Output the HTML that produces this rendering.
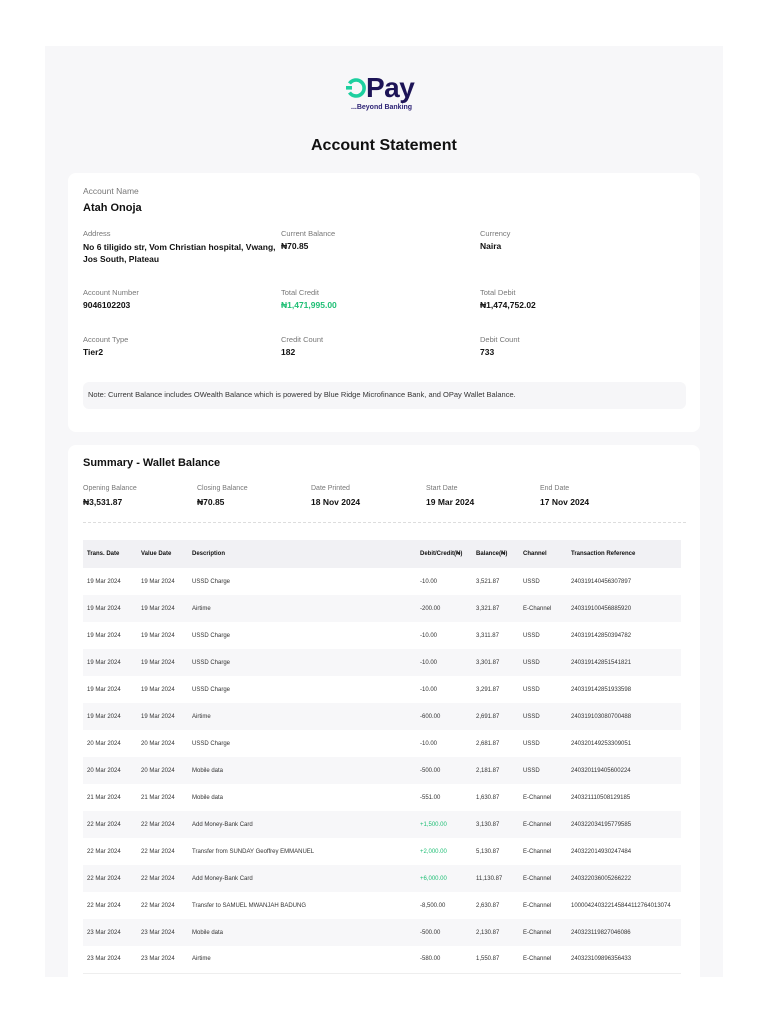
<!DOCTYPE html>
<html><head><meta charset="utf-8"><style>
*{margin:0;padding:0;box-sizing:border-box}
body{width:768px;height:1024px;background:#fff;font-family:"Liberation Sans",sans-serif;color:#111;position:relative;overflow:hidden}
.panel{position:absolute;left:45px;top:46px;width:678px;height:931px;background:#f7f7f9}
.card{position:absolute;background:#fff;border-radius:8px}
.abs{position:absolute;white-space:nowrap}
.lbl{font-size:7.5px;color:#777}
.val{font-size:8.5px;font-weight:bold;color:#111}
table{position:absolute;left:83px;top:540px;width:598px;border-collapse:collapse;font-size:6px;color:#333;background:#fff;border-bottom:1px solid #eee}
th{background:#f1f1f4;height:28px;text-align:left;font-weight:bold;color:#111;font-size:6px;padding-left:4px}
td{height:27px;padding-left:4px;white-space:nowrap}
tr:nth-child(odd) td{background:#f7f7f9}
.g{color:#1fbf75}
</style></head><body>
<div class="panel"></div>
<div class="abs" style="left:346px;top:77px;">
<svg width="20" height="22" viewBox="0 0 20 22"><path d="M3.5 6.5 A8 8 0 1 1 3.5 15.5" fill="none" stroke="#1dcf9f" stroke-width="3.6"/><rect x="0" y="9" width="6" height="3.6" fill="#1dcf9f"/></svg>
</div>
<div class="abs" style="left:366px;top:73px;font-size:28px;font-weight:bold;color:#1d1457;letter-spacing:-0.5px;line-height:30px">Pay</div>
<div class="abs" style="left:351px;top:104px;font-size:7px;font-weight:bold;color:#2e2476">...Beyond Banking</div>
<div class="abs" style="left:311px;top:137px;font-size:16px;font-weight:bold">Account Statement</div>

<div class="card" style="left:68px;top:173px;width:632px;height:259px"></div>
<div class="abs lbl" style="left:83px;top:186px;font-size:8.5px">Account Name</div>
<div class="abs" style="left:83px;top:202px;font-size:11px;font-weight:bold">Atah Onoja</div>
<div class="abs lbl" style="left:83px;top:229px">Address</div>
<div class="abs val" style="left:83px;top:241px;line-height:12px">No 6 tiligido str, Vom Christian hospital, Vwang,<br>Jos South, Plateau</div>
<div class="abs lbl" style="left:281px;top:229px">Current Balance</div>
<div class="abs val" style="left:281px;top:241px">₦70.85</div>
<div class="abs lbl" style="left:480px;top:229px">Currency</div>
<div class="abs val" style="left:480px;top:241px">Naira</div>
<div class="abs lbl" style="left:83px;top:288px">Account Number</div>
<div class="abs val" style="left:83px;top:300px">9046102203</div>
<div class="abs lbl" style="left:281px;top:288px">Total Credit</div>
<div class="abs val g" style="left:281px;top:300px">₦1,471,995.00</div>
<div class="abs lbl" style="left:480px;top:288px">Total Debit</div>
<div class="abs val" style="left:480px;top:300px">₦1,474,752.02</div>
<div class="abs lbl" style="left:83px;top:335px">Account Type</div>
<div class="abs val" style="left:83px;top:347px">Tier2</div>
<div class="abs lbl" style="left:281px;top:335px">Credit Count</div>
<div class="abs val" style="left:281px;top:347px">182</div>
<div class="abs lbl" style="left:480px;top:335px">Debit Count</div>
<div class="abs val" style="left:480px;top:347px">733</div>
<div class="abs" style="left:83px;top:382px;width:603px;height:27px;background:#f6f6f8;border-radius:6px;font-size:7.5px;color:#333;padding:8px 0 0 5px">Note: Current Balance includes OWealth Balance which is powered by Blue Ridge Microfinance Bank, and OPay Wallet Balance.</div>

<div class="card" style="left:68px;top:445px;width:632px;height:532px;border-radius:8px 8px 0 0"></div>
<div class="abs" style="left:83px;top:457px;font-size:11px;font-weight:bold">Summary - Wallet Balance</div>
<div class="abs lbl" style="left:83px;top:485px;font-size:7px">Opening Balance</div>
<div class="abs val" style="left:83px;top:497px">₦3,531.87</div>
<div class="abs lbl" style="left:197px;top:485px;font-size:7px">Closing Balance</div>
<div class="abs val" style="left:197px;top:497px">₦70.85</div>
<div class="abs lbl" style="left:311px;top:485px;font-size:7px">Date Printed</div>
<div class="abs val" style="left:311px;top:497px">18 Nov 2024</div>
<div class="abs lbl" style="left:426px;top:485px;font-size:7px">Start Date</div>
<div class="abs val" style="left:426px;top:497px">19 Mar 2024</div>
<div class="abs lbl" style="left:540px;top:485px;font-size:7px">End Date</div>
<div class="abs val" style="left:540px;top:497px">17 Nov 2024</div>
<div class="abs" style="left:83px;top:522px;width:603px;border-top:1px dashed #ddd"></div>

<table>
<colgroup><col style="width:54px"><col style="width:51px"><col style="width:228px"><col style="width:56px"><col style="width:47px"><col style="width:48px"><col></colgroup>
<tr><th>Trans. Date</th><th>Value Date</th><th>Description</th><th>Debit/Credit(₦)</th><th>Balance(₦)</th><th>Channel</th><th>Transaction Reference</th></tr>
<tr><td>19 Mar 2024</td><td>19 Mar 2024</td><td>USSD Charge</td><td>-10.00</td><td>3,521.87</td><td>USSD</td><td>240319140456307897</td></tr>
<tr><td>19 Mar 2024</td><td>19 Mar 2024</td><td>Airtime</td><td>-200.00</td><td>3,321.87</td><td>E-Channel</td><td>240319100456885920</td></tr>
<tr><td>19 Mar 2024</td><td>19 Mar 2024</td><td>USSD Charge</td><td>-10.00</td><td>3,311.87</td><td>USSD</td><td>240319142850394782</td></tr>
<tr><td>19 Mar 2024</td><td>19 Mar 2024</td><td>USSD Charge</td><td>-10.00</td><td>3,301.87</td><td>USSD</td><td>240319142851541821</td></tr>
<tr><td>19 Mar 2024</td><td>19 Mar 2024</td><td>USSD Charge</td><td>-10.00</td><td>3,291.87</td><td>USSD</td><td>240319142851933598</td></tr>
<tr><td>19 Mar 2024</td><td>19 Mar 2024</td><td>Airtime</td><td>-600.00</td><td>2,691.87</td><td>USSD</td><td>240319103080700488</td></tr>
<tr><td>20 Mar 2024</td><td>20 Mar 2024</td><td>USSD Charge</td><td>-10.00</td><td>2,681.87</td><td>USSD</td><td>240320149253309051</td></tr>
<tr><td>20 Mar 2024</td><td>20 Mar 2024</td><td>Mobile data</td><td>-500.00</td><td>2,181.87</td><td>USSD</td><td>240320119405600224</td></tr>
<tr><td>21 Mar 2024</td><td>21 Mar 2024</td><td>Mobile data</td><td>-551.00</td><td>1,630.87</td><td>E-Channel</td><td>240321110508129185</td></tr>
<tr><td>22 Mar 2024</td><td>22 Mar 2024</td><td>Add Money-Bank Card</td><td class="g">+1,500.00</td><td>3,130.87</td><td>E-Channel</td><td>240322034195779585</td></tr>
<tr><td>22 Mar 2024</td><td>22 Mar 2024</td><td>Transfer from SUNDAY Geoffrey EMMANUEL</td><td class="g">+2,000.00</td><td>5,130.87</td><td>E-Channel</td><td>240322014930247484</td></tr>
<tr><td>22 Mar 2024</td><td>22 Mar 2024</td><td>Add Money-Bank Card</td><td class="g">+6,000.00</td><td>11,130.87</td><td>E-Channel</td><td>240322036005266222</td></tr>
<tr><td>22 Mar 2024</td><td>22 Mar 2024</td><td>Transfer to SAMUEL MWANJAH BADUNG</td><td>-8,500.00</td><td>2,630.87</td><td>E-Channel</td><td>100004240322145844112764013074</td></tr>
<tr><td>23 Mar 2024</td><td>23 Mar 2024</td><td>Mobile data</td><td>-500.00</td><td>2,130.87</td><td>E-Channel</td><td>240323119827046086</td></tr>
<tr><td>23 Mar 2024</td><td>23 Mar 2024</td><td>Airtime</td><td>-580.00</td><td>1,550.87</td><td>E-Channel</td><td>240323109896356433</td></tr>
</table>
</body></html>
